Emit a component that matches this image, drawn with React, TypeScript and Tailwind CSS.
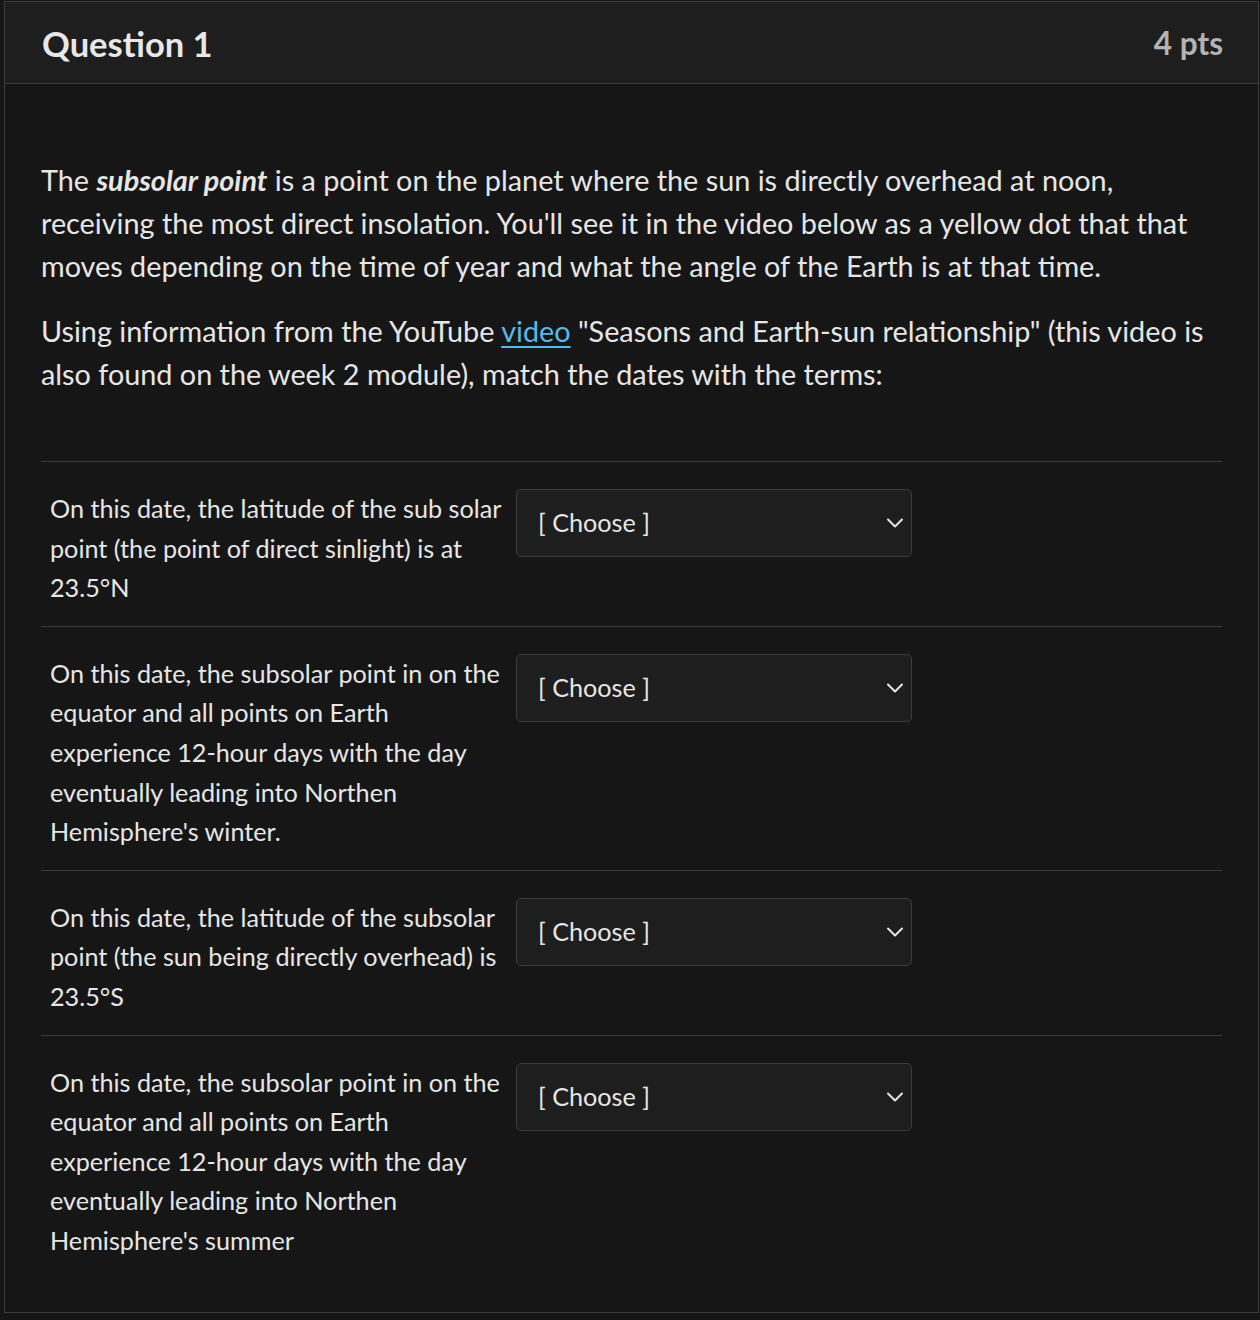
import React from "react";

const rows = [
  "On this date, the latitude of the sub solar point (the point of direct sinlight) is at 23.5°N",
  "On this date, the subsolar point in on the equator and all points on Earth experience 12-hour days with the day eventually leading into Northen Hemisphere's winter.",
  "On this date, the latitude of the subsolar point (the sun being directly overhead) is 23.5°S",
  "On this date, the subsolar point in on the equator and all points on Earth experience 12-hour days with the day eventually leading into Northen Hemisphere's summer",
];

function Chevron() {
  return (
    <svg width="18" height="12" viewBox="0 0 18 12" fill="none" className="shrink-0">
      <path d="M2 2.5 L9 9.5 L16 2.5" stroke="#e6e6e6" strokeWidth="2" strokeLinecap="round" strokeLinejoin="round" />
    </svg>
  );
}

export default function App() {
  return (
    <div className="min-h-[1320px] w-[1260px] bg-[#161616] pt-[1px]" style={{ fontFamily: "Lato, 'Noto Sans', sans-serif" }}>
      <div className="ml-[4px] w-[1255px] border border-[#3c3c3c] bg-[#161616]">
        <div className="flex h-[82px] items-center justify-between border-b border-[#3c3c3c] bg-[#1e1e1e] pl-[37px] pr-[35px] pt-[2px]">
          <h2 className="text-[34.5px] font-bold text-[#e8e8e8]">Question 1</h2>
          <div className="text-[31.5px] font-bold text-[#b3b3b3]">4 pts</div>
        </div>
        <div className="px-[36px] pt-[75px] pb-[33px] text-[#e6e6e6]">
          <p className="text-[28.8px] leading-[43.2px]">
            The <strong className="italic font-bold">subsolar point</strong> is a point on the planet where the sun is directly overhead at noon, receiving the most direct insolation. You'll see it in the video below as a yellow dot that that moves depending on the time of year and what the angle of the Earth is at that time.
          </p>
          <p className="mt-[21px] text-[28.8px] leading-[43.2px]">
            Using information from the YouTube <a className="text-[#5bb8e6] underline underline-offset-[4px]">video</a> "Seasons and Earth-sun relationship" (this video is also found on the week 2 module), match the dates with the terms:
          </p>
          <div className="mt-[65px]">
            {rows.map((t, i) => (
              <div key={i} className="flex items-start gap-[10px] border-t border-[#3a3a3a] pl-[9px] pt-[27px] pb-[18px]">
                <div className="w-[456px] text-[25.2px] leading-[39.6px] text-[#e6e6e6]">{t}</div>
                <div className="flex h-[68px] w-[396px] items-center justify-between rounded-[5px] border border-[#3c3c3c] bg-[#1e1e1e] pl-[21px] pr-[7px]">
                  <span className="text-[25.2px] text-[#e6e6e6]">[ Choose ]</span>
                  <Chevron />
                </div>
              </div>
            ))}
          </div>
        </div>
      </div>
    </div>
  );
}
